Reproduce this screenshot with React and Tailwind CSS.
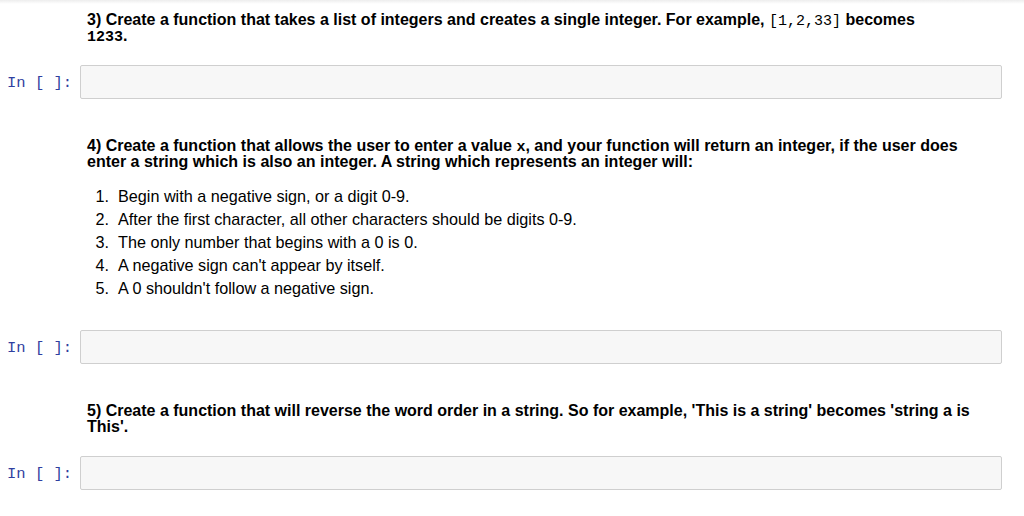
import React from "react";

const sans = { fontFamily: '"Liberation Sans", Arial, Helvetica, sans-serif' };

function Prompt() {
  return (
    <div className="w-[80px] shrink-0 flex items-center pl-[7px] pt-[4px]">
      <span className="font-['Liberation_Mono',monospace] text-[15.5px] text-[#303F9F] whitespace-pre">In [ ]:</span>
    </div>
  );
}

function CodeCell() {
  return (
    <div className="flex">
      <Prompt />
      <div className="w-[922px] h-[34px] bg-[#f7f7f7] border border-[#cfcfcf] rounded-[2px]" />
    </div>
  );
}

function Md({ children, className = "" }) {
  return (
    <div className={"flex " + className}>
      <div className="w-[80px] shrink-0" />
      <div className="pl-[7px] w-[900px] text-black">{children}</div>
    </div>
  );
}

const mono = "font-['Liberation_Mono',monospace] text-[15px] leading-[8px]";

export default function App() {
  const items = [
    "Begin with a negative sign, or a digit 0-9.",
    "After the first character, all other characters should be digits 0-9.",
    "The only number that begins with a 0 is 0.",
    "A negative sign can't appear by itself.",
    "A 0 shouldn't follow a negative sign.",
  ];
  return (
    <div className="w-[1024px] h-[516px] overflow-hidden bg-white relative" style={sans}>
      <div className="absolute top-0 left-0 right-0 h-[4px] bg-gradient-to-b from-[#ededed] to-white" />
      <div className="flex flex-col pt-[12px]">
        <Md>
          <p className="font-bold text-[16px] leading-[16px] w-[890px]">
            3) Create a function that takes a list of integers and creates a single integer. For example,{" "}
            <code className={mono + " font-normal"}>[1,2,33]</code> becomes
            <br />
            <code className={mono + " font-bold"}>1233</code>.
          </p>
        </Md>
        <div className="mt-[21px]">
          <CodeCell />
        </div>
        <Md className="mt-[39px]">
          <p className="font-bold text-[16px] leading-[16px] w-[890px]">
            4) Create a function that allows the user to enter a value{" "}
            <code className={mono + " font-bold"}>x</code>, and your function will return an integer, if the user does enter a string which is also an integer. A string which represents an integer will:
          </p>
          <ol className="mt-[15px] text-[16.2px] leading-[23px]">
            {items.map((t, i) => (
              <li key={t} className="flex">
                <span className="w-[31px] shrink-0 text-right pr-[9px]">{i + 1}.</span>
                <span>{t}</span>
              </li>
            ))}
          </ol>
        </Md>
        <div className="mt-[30px]">
          <CodeCell />
        </div>
        <Md className="mt-[39px]">
          <p className="font-bold text-[16px] leading-[16px] w-[890px]">
            5) Create a function that will reverse the word order in a string. So for example, 'This is a string' becomes 'string a is This'.
          </p>
        </Md>
        <div className="mt-[21px]">
          <CodeCell />
        </div>
      </div>
    </div>
  );
}
